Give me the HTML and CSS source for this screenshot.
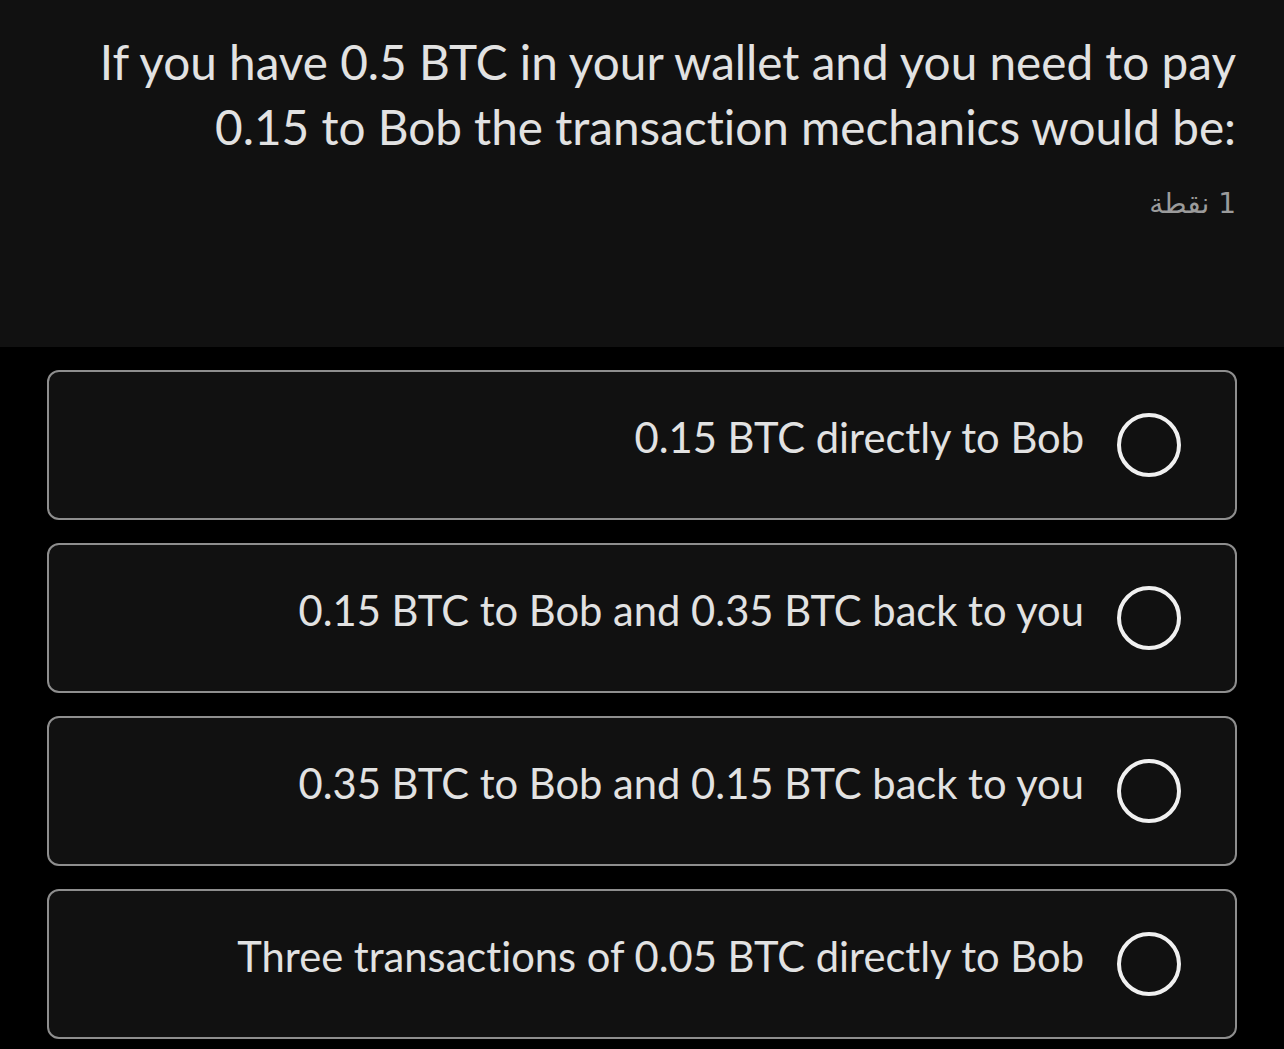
FILE: index.html
```html
<!DOCTYPE html>
<html lang="ar">
<head>
<meta charset="utf-8">
<link rel="stylesheet" href="styles.css">
</head>
<body>
<header class="question">
  <h1 class="title">If you have 0.5 BTC in your wallet and you need to pay 0.15 to Bob the transaction mechanics would be:</h1>
  <div class="points">1 نقطة</div>
</header>
<main class="options">
  <label class="option"><span class="label">0.15 BTC directly to Bob</span><span class="radio"></span></label>
  <label class="option"><span class="label">0.15 BTC to Bob and 0.35 BTC back to you</span><span class="radio"></span></label>
  <label class="option"><span class="label">0.35 BTC to Bob and 0.15 BTC back to you</span><span class="radio"></span></label>
  <label class="option"><span class="label">Three transactions of 0.05 BTC directly to Bob</span><span class="radio"></span></label>
</main>
</body>
</html>
```
FILE: styles.css
```css
html, body {
  margin: 0;
  padding: 0;
  background: #000;
  font-family: Lato, "Noto Sans", "DejaVu Sans", sans-serif;
  font-variant-ligatures: none;
  color: #e2e2e2;
}
.question {
  background: #111111;
  height: 347px;
  box-sizing: border-box;
  padding: 29px 48px 0 48px;
  text-align: right;
}
.title {
  margin: 0;
  font-weight: 400;
  font-size: 47.7px;
  line-height: 65px;
  color: #e2e2e2;
}
.points {
  margin-top: 28px;
  font-size: 28px;
  color: #9b9b9b;
  direction: rtl;
  font-family: "DejaVu Sans", "Noto Sans", sans-serif;
}
.options {
  display: flex;
  flex-direction: column;
  gap: 23px;
  padding: 23px 47px 0 47px;
}
.option {
  display: flex;
  justify-content: flex-end;
  align-items: center;
  gap: 33px;
  height: 150px;
  box-sizing: border-box;
  border: 2px solid #8e8e8e;
  border-radius: 12px;
  background: #111111;
  padding: 0 54px 0 40px;
}
.label {
  font-size: 41.7px;
  color: #e2e2e2;
  margin-top: -17px;
}
.radio {
  width: 64px;
  height: 64px;
  box-sizing: border-box;
  border: 4px solid #f0f0f0;
  border-radius: 50%;
  flex: none;
}
```
